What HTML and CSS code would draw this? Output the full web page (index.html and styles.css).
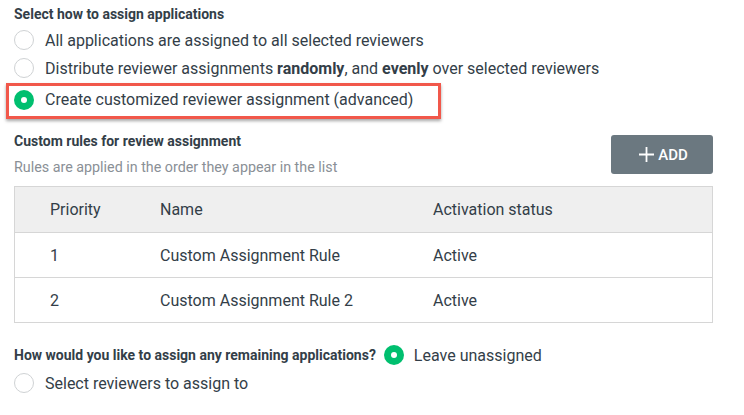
FILE: index.html
```html
<!DOCTYPE html>
<html lang="en">
<head>
<meta charset="utf-8">
<title>Review assignment</title>
<link rel="stylesheet" href="styles.css">
</head>
<body>
<div class="page">
  <div class="label">Select how to assign applications</div>
  <div class="options">
    <label class="option"><span class="radio"></span><span>All applications are assigned to all selected reviewers</span></label>
    <label class="option"><span class="radio"></span><span>Distribute reviewer assignments <b>randomly</b>, and <b>evenly</b> over selected reviewers</span></label>
    <label class="option option-highlight"><span class="radio checked"></span><span>Create customized reviewer assignment (advanced)</span></label>
  </div>

  <div class="rules-head">
    <div class="rules-text">
      <div class="label">Custom rules for review assignment</div>
      <div class="hint">Rules are applied in the order they appear in the list</div>
    </div>
    <button class="add-btn" type="button">
      <svg class="plus" width="17" height="17" viewBox="0 0 17 17" aria-hidden="true"><path d="M8.5 1v15M1 8.5h15" stroke="#fff" stroke-width="1.8" fill="none"/></svg>
      <span>ADD</span>
    </button>
  </div>

  <div class="table">
    <div class="row head">
      <div class="cell">Priority</div>
      <div class="cell">Name</div>
      <div class="cell">Activation status</div>
    </div>
    <div class="row">
      <div class="cell">1</div>
      <div class="cell">Custom Assignment Rule</div>
      <div class="cell">Active</div>
    </div>
    <div class="row">
      <div class="cell">2</div>
      <div class="cell">Custom Assignment Rule 2</div>
      <div class="cell">Active</div>
    </div>
  </div>

  <div class="remaining">
    <span class="label">How would you like to assign any remaining applications?</span>
    <label class="option inline"><span class="radio checked"></span><span>Leave unassigned</span></label>
  </div>
  <label class="option"><span class="radio"></span><span>Select reviewers to assign to</span></label>
</div>
</body>
</html>
```

FILE: styles.css
```css
* { box-sizing: border-box; }

body {
  margin: 0;
  background: #fff;
  font-family: Roboto, "Liberation Sans", sans-serif;
  color: #333e48;
}

.page {
  width: 713px;
  padding: 5px 0 0 14px;
  display: flex;
  flex-direction: column;
}

.label {
  font-size: 14px;
  font-weight: 700;
  line-height: 18px;
  color: #333e48;
}

.options {
  display: flex;
  flex-direction: column;
  margin-top: 3px;
}

.option {
  display: flex;
  align-items: center;
  gap: 11px;
  height: 28px;
  font-size: 16px;
  color: #333e48;
}

.option b { font-weight: 700; }

.radio {
  flex: none;
  width: 20px;
  height: 20px;
  border-radius: 50%;
  border: 1px solid #cfd2d4;
  background: #fff;
  position: relative;
}

.radio.checked {
  border: none;
  background: #00bf6f;
}

.radio.checked::after {
  content: "";
  position: absolute;
  left: 7px;
  top: 7px;
  width: 6px;
  height: 6px;
  border-radius: 50%;
  background: #fff;
}

.option-highlight {
  margin: 1px 0 0 -8px;
  width: 435px;
  height: 36px;
  padding: 0 0 3px 5px;
  border: 3px solid #f1584b;
  box-shadow: 0 2px 3px rgba(0, 0, 0, 0.35);
}

.rules-head {
  margin-top: 13px;
  display: flex;
  justify-content: space-between;
  align-items: center;
}

.rules-text {
  display: flex;
  flex-direction: column;
  gap: 7px;
}

.hint {
  font-size: 14.3px;
  line-height: 20px;
  color: #8a9096;
}

.add-btn {
  width: 102px;
  height: 39px;
  border: none;
  border-radius: 3px;
  background: #6b7880;
  color: #fff;
  font-family: inherit;
  font-size: 15px;
  font-weight: 500;
  display: flex;
  align-items: center;
  justify-content: center;
  gap: 3px;
  padding: 0 0 0 2px;
}

.plus { display: block; }

.table {
  margin-top: 9px;
  border: 1px solid #d6d6d6;
}

.row {
  display: grid;
  grid-template-columns: 110px 273px 1fr;
  height: 45px;
  align-items: center;
  font-size: 16px;
  border-top: 1px solid #d6d6d6;
}

.row.head {
  background: #efefef;
  border-top: none;
  height: 45px;
}

.cell { padding-left: 35px; }

.remaining {
  margin-top: 18px;
  display: flex;
  align-items: center;
  gap: 8px;
}

.option.inline { gap: 10px; }
```
